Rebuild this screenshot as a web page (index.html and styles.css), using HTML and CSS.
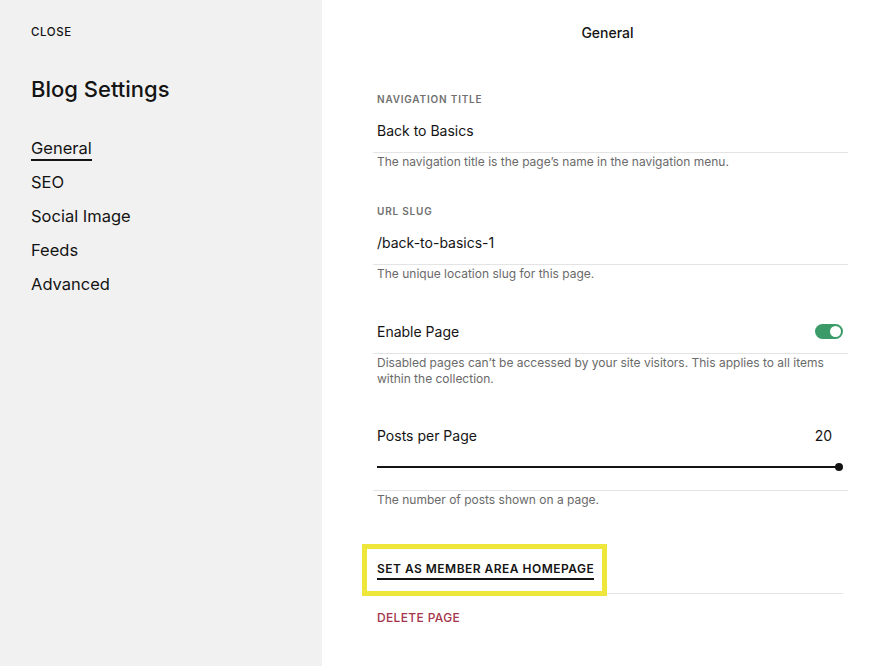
FILE: index.html
```html
<!doctype html>
<html>
<head>
    <meta charset="utf-8">
    <meta name="viewport" content="width=device-width, initial-scale=1">
    <title>Blog Settings</title>
    <link rel="stylesheet" href="styles.css">
</head>
<body>
    <aside class="sidebar">
        <div class="close">CLOSE</div>
        <h1 class="sidebar-title">Blog Settings</h1>
        <nav class="menu">
            <a class="menu-item active">General</a>
            <a class="menu-item">SEO</a>
            <a class="menu-item">Social Image</a>
            <a class="menu-item">Feeds</a>
            <a class="menu-item">Advanced</a>
        </nav>
    </aside>

    <main class="panel">
        <div class="panel-title">General</div>

        <div class="content">
            <div class="field">
                <div class="label">NAVIGATION TITLE</div>
                <div class="row">Back to Basics</div>
                <div class="desc">The navigation title is the page’s name in the navigation menu.</div>
            </div>

            <div class="field">
                <div class="label">URL SLUG</div>
                <div class="row">/back-to-basics-1</div>
                <div class="desc">The unique location slug for this page.</div>
            </div>

            <div class="field toggle-field">
                <div class="row">
                    <span>Enable Page</span>
                    <span class="toggle"><span class="knob"></span></span>
                </div>
                <div class="desc">Disabled pages can’t be accessed by your site visitors. This applies to all items within the collection.</div>
            </div>

            <div class="field slider-field">
                <div class="slider-box">
                    <div class="slider-head">
                        <span>Posts per Page</span>
                        <span class="slider-value">20</span>
                    </div>
                    <div class="slider"><span class="dot"></span></div>
                </div>
                <div class="desc">The number of posts shown on a page.</div>
            </div>

            <div class="action-row">
                <span class="member-link">SET AS MEMBER AREA HOMEPAGE</span>
                <div class="highlight"></div>
            </div>
            <div class="delete">DELETE PAGE</div>
        </div>
    </main>
</body>
</html>
```

FILE: styles.css
```css
html, body {
    height: 100%;
}
body {
    margin: 0;
    display: flex;
    font-family: Inter, "Noto Sans", sans-serif;
    color: #141414;
    background-color: #fff;
}
.sidebar {
    width: 322px;
    flex-shrink: 0;
    background-color: #f1f1f1;
    padding: 25px 31px 0;
    box-sizing: border-box;
}
.close {
    font-size: 11.5px;
    font-weight: 500;
    letter-spacing: 0.05em;
    line-height: 14px;
}
.sidebar-title {
    margin: 37px 0 0;
    font-size: 22px;
    font-weight: 500;
    line-height: 26px;
}
.menu {
    margin-top: 35px;
    display: flex;
    flex-direction: column;
    align-items: flex-start;
}
.menu-item {
    font-size: 16.5px;
    line-height: 22px;
    height: 34px;
    box-sizing: border-box;
}
.menu-item.active {
    height: 24px;
    margin-bottom: 10px;
    border-bottom: 2px solid #141414;
}
.panel {
    flex: 1;
    position: relative;
}
.panel-title {
    text-align: center;
    font-size: 14px;
    font-weight: 500;
    line-height: 18px;
    margin-top: 24px;
    padding-right: 2px;
}
.content {
    width: 475px;
    margin: 50px 0 0 51px;
}
.field {
    margin-bottom: 34px;
}
.label {
    font-size: 10px;
    font-weight: 600;
    letter-spacing: 0.08em;
    line-height: 14px;
    color: #707070;
    padding: 0 4px;
    margin-bottom: 2px;
}
.row {
    height: 44px;
    display: flex;
    align-items: center;
    justify-content: space-between;
    padding: 0 5px 0 4px;
    border-bottom: 1px solid #e4e4e4;
    font-size: 14px;
}
.desc {
    padding: 1px 4px 0;
    font-size: 12px;
    line-height: 16px;
    color: #6a6a6a;
}
.toggle-field {
    margin-top: -7px;
    margin-bottom: 33px;
}
.toggle {
    width: 28px;
    height: 15px;
    border-radius: 8px;
    background-color: #3a9b68;
    display: flex;
    align-items: center;
    justify-content: flex-end;
    padding: 0 2px;
    box-sizing: border-box;
}
.knob {
    width: 11px;
    height: 11px;
    border-radius: 50%;
    background-color: #fff;
}
.slider-box {
    padding: 8px 9px 22px 4px;
    border-bottom: 1px solid #e4e4e4;
    font-size: 14px;
}
.slider-head {
    display: flex;
    justify-content: space-between;
    line-height: 16px;
    padding-right: 7px;
}
.slider {
    margin-top: 22px;
    height: 2px;
    background-color: #141414;
    position: relative;
}
.dot {
    position: absolute;
    right: -4px;
    top: -3px;
    width: 8px;
    height: 8px;
    border-radius: 50%;
    background-color: #141414;
}
.action-row {
    position: relative;
    margin-top: 36px;
    height: 50px;
    width: 470px;
    border-bottom: 1px solid #e4e4e4;
    padding: 13px 4px 0;
    box-sizing: border-box;
}
.member-link {
    display: inline-block;
    font-size: 12px;
    font-weight: 600;
    letter-spacing: 0.04em;
    line-height: 16px;
    padding-bottom: 1px;
    border-bottom: 2px solid #141414;
}
.highlight {
    position: absolute;
    left: -11px;
    top: 0;
    width: 245px;
    height: 52px;
    border: 5px solid #eee63a;
    box-sizing: border-box;
}
.delete {
    margin-top: 16px;
    padding: 0 4px;
    font-size: 12px;
    font-weight: 500;
    letter-spacing: 0.03em;
    line-height: 16px;
    color: #a5354a;
}
```
